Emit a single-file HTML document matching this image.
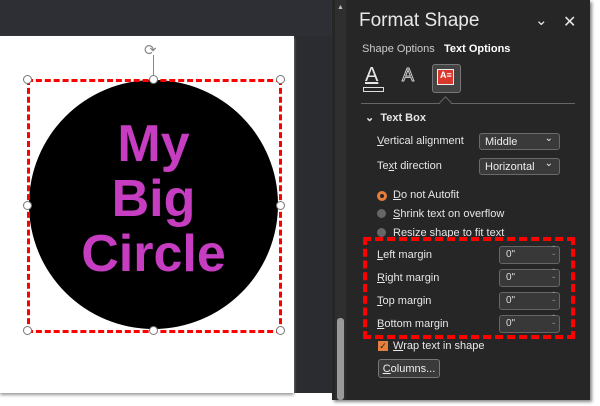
<!DOCTYPE html><html><head><style>
body{margin:0;width:600px;height:406px;position:relative;background:#fff;font-family:"Liberation Sans",sans-serif;overflow:hidden}
.a{position:absolute}
.t{color:#e6e6e6;font-size:11px;position:absolute}
.dd{position:absolute;left:479px;height:17px;border:1px solid #6a6a6a;border-radius:3px;background:#3a3a3a;color:#eee;font-size:11px;line-height:17px;padding-left:5px;box-sizing:border-box;width:81px}
.dd:after{content:"⌄";position:absolute;right:6px;top:-4px;font-size:10px}
.in{position:absolute;left:499px;width:61px;height:18px;border:1px solid #666;border-radius:3px;background:#383838;color:#ddd;font-size:10px;line-height:16px;padding-left:6px;box-sizing:border-box}
.in:after{content:"ˆ\Aˇ";white-space:pre;position:absolute;right:4px;top:-1px;font-size:8px;line-height:8px;color:#aaa}
.rd{position:absolute;left:377px;width:9px;height:9px;border-radius:50%;background:#666}
.h{position:absolute;width:7px;height:7px;border:1px solid #777;border-radius:50%;background:#fff}
</style></head><body>
<div class="a" style="left:0;top:0;width:332px;height:36px;background:#2d2f35"></div>
<div class="a" style="left:294px;top:36px;width:38px;height:357px;background:#2b2c30"></div>
<div class="a" style="left:0;top:36px;width:294px;height:357px;background:#fff;box-shadow:0 2px 3px #999"></div>
<div class="a" style="left:29px;top:80px;width:249px;height:249px;border-radius:50%;background:#000"></div>
<div class="a" style="left:27px;top:79px;width:249px;height:248px;border:3px dashed #f00"></div>
<div class="a" style="left:153px;top:55px;width:1px;height:24px;background:#888"></div>
<div class="a" style="left:144px;top:41px;font-size:15px;color:#888">⟳</div>
<div class="h" style="left:23px;top:75px"></div><div class="h" style="left:149px;top:75px"></div><div class="h" style="left:276px;top:75px"></div>
<div class="h" style="left:23px;top:201px"></div><div class="h" style="left:276px;top:201px"></div>
<div class="h" style="left:23px;top:326px"></div><div class="h" style="left:149px;top:326px"></div><div class="h" style="left:276px;top:326px"></div>
<div class="a" style="left:29px;top:117px;width:249px;text-align:center;color:#c63dc2;font-weight:bold;font-size:52px;line-height:55px">My<br>Big<br>Circle</div>
<div class="a" style="left:332px;top:0;width:258px;height:400px;background:#262626;box-shadow:2px 2px 3px #888"></div>
<div class="a" style="left:335px;top:0;width:11px;height:400px;background:#2f2f2f"></div>
<div class="a" style="left:337px;top:318px;width:7px;height:82px;background:#9a9a9a;border-radius:3px"></div>
<div class="a" style="left:337px;top:4px;color:#bbb;font-size:7px">▲</div>
<div class="t" style="left:359px;top:10px;font-size:19px;color:#e8e8e8">Format Shape</div>
<div class="t" style="left:535px;top:11px;font-size:15px">⌄</div>
<div class="t" style="left:563px;top:12px;font-size:16px">✕</div>
<div class="t" style="left:362px;top:43px;color:#ccc">Shape Options</div>
<div class="t" style="left:444px;top:43px;font-weight:bold;color:#fff">Text Options</div>
<div class="t" style="left:365px;top:64px;font-size:20px;text-decoration:underline">A</div>
<div class="a" style="left:363px;top:87px;width:19px;height:3px;border:1px solid #ddd"></div>
<div class="t" style="left:402px;top:65px;font-size:18px;color:#222;-webkit-text-stroke:1px #ccc">A</div>
<div class="a" style="left:432px;top:64px;width:27px;height:27px;border:1px solid #777;border-radius:3px;background:#444"></div>
<div class="a" style="left:437px;top:69px;width:17px;height:16px;background:#d9392c;border:1px solid #eee;box-sizing:border-box;color:#fff;font-size:9px;font-weight:bold;padding-left:2px;line-height:11px">A≡</div>
<div class="a" style="left:361px;top:103px;width:214px;height:1px;background:#666"></div>
<div class="a" style="left:441px;top:98px;width:8px;height:8px;background:#262626;border-left:1px solid #666;border-top:1px solid #666;transform:rotate(45deg)"></div>
<div class="t" style="left:365px;top:111px;font-weight:bold">⌄&nbsp; Text Box</div>
<div class="t" style="left:377px;top:135px"><u>V</u>ertical alignment</div>
<div class="dd" style="top:133px">Middle</div>
<div class="t" style="left:377px;top:160px">Te<u>x</u>t direction</div>
<div class="dd" style="top:158px">Horizontal</div>
<div class="rd" style="top:191px;background:#262626;border:3px solid #e67e3c;width:4px;height:4px"></div>
<div class="t" style="left:393px;top:189px"><u>D</u>o not Autofit</div>
<div class="rd" style="top:209px"></div><div class="t" style="left:393px;top:208px"><u>S</u>hrink text on overflow</div>
<div class="rd" style="top:228px"></div><div class="t" style="left:393px;top:227px">Resize shape to fit text</div>
<div class="a" style="left:363px;top:237px;width:204px;height:94px;border:4px dashed #f00"></div>
<div class="t" style="left:377px;top:249px"><u>L</u>eft margin</div><div class="in" style="top:246px">0"</div>
<div class="t" style="left:377px;top:272px"><u>R</u>ight margin</div><div class="in" style="top:269px">0"</div>
<div class="t" style="left:377px;top:295px"><u>T</u>op margin</div><div class="in" style="top:292px">0"</div>
<div class="t" style="left:377px;top:318px"><u>B</u>ottom margin</div><div class="in" style="top:315px">0"</div>
<div class="a" style="left:378px;top:341px;width:10px;height:10px;background:#e67e3c;color:#222;font-size:9px;line-height:10px;text-align:center">✓</div>
<div class="t" style="left:393px;top:340px"><u>W</u>rap text in shape</div>
<div class="a" style="left:378px;top:359px;width:62px;height:19px;border:1px solid #777;border-radius:3px;background:#3a3a3a;color:#eee;font-size:11px;line-height:19px;text-align:center;box-sizing:border-box"><u>C</u>olumns...</div>
</body></html>
